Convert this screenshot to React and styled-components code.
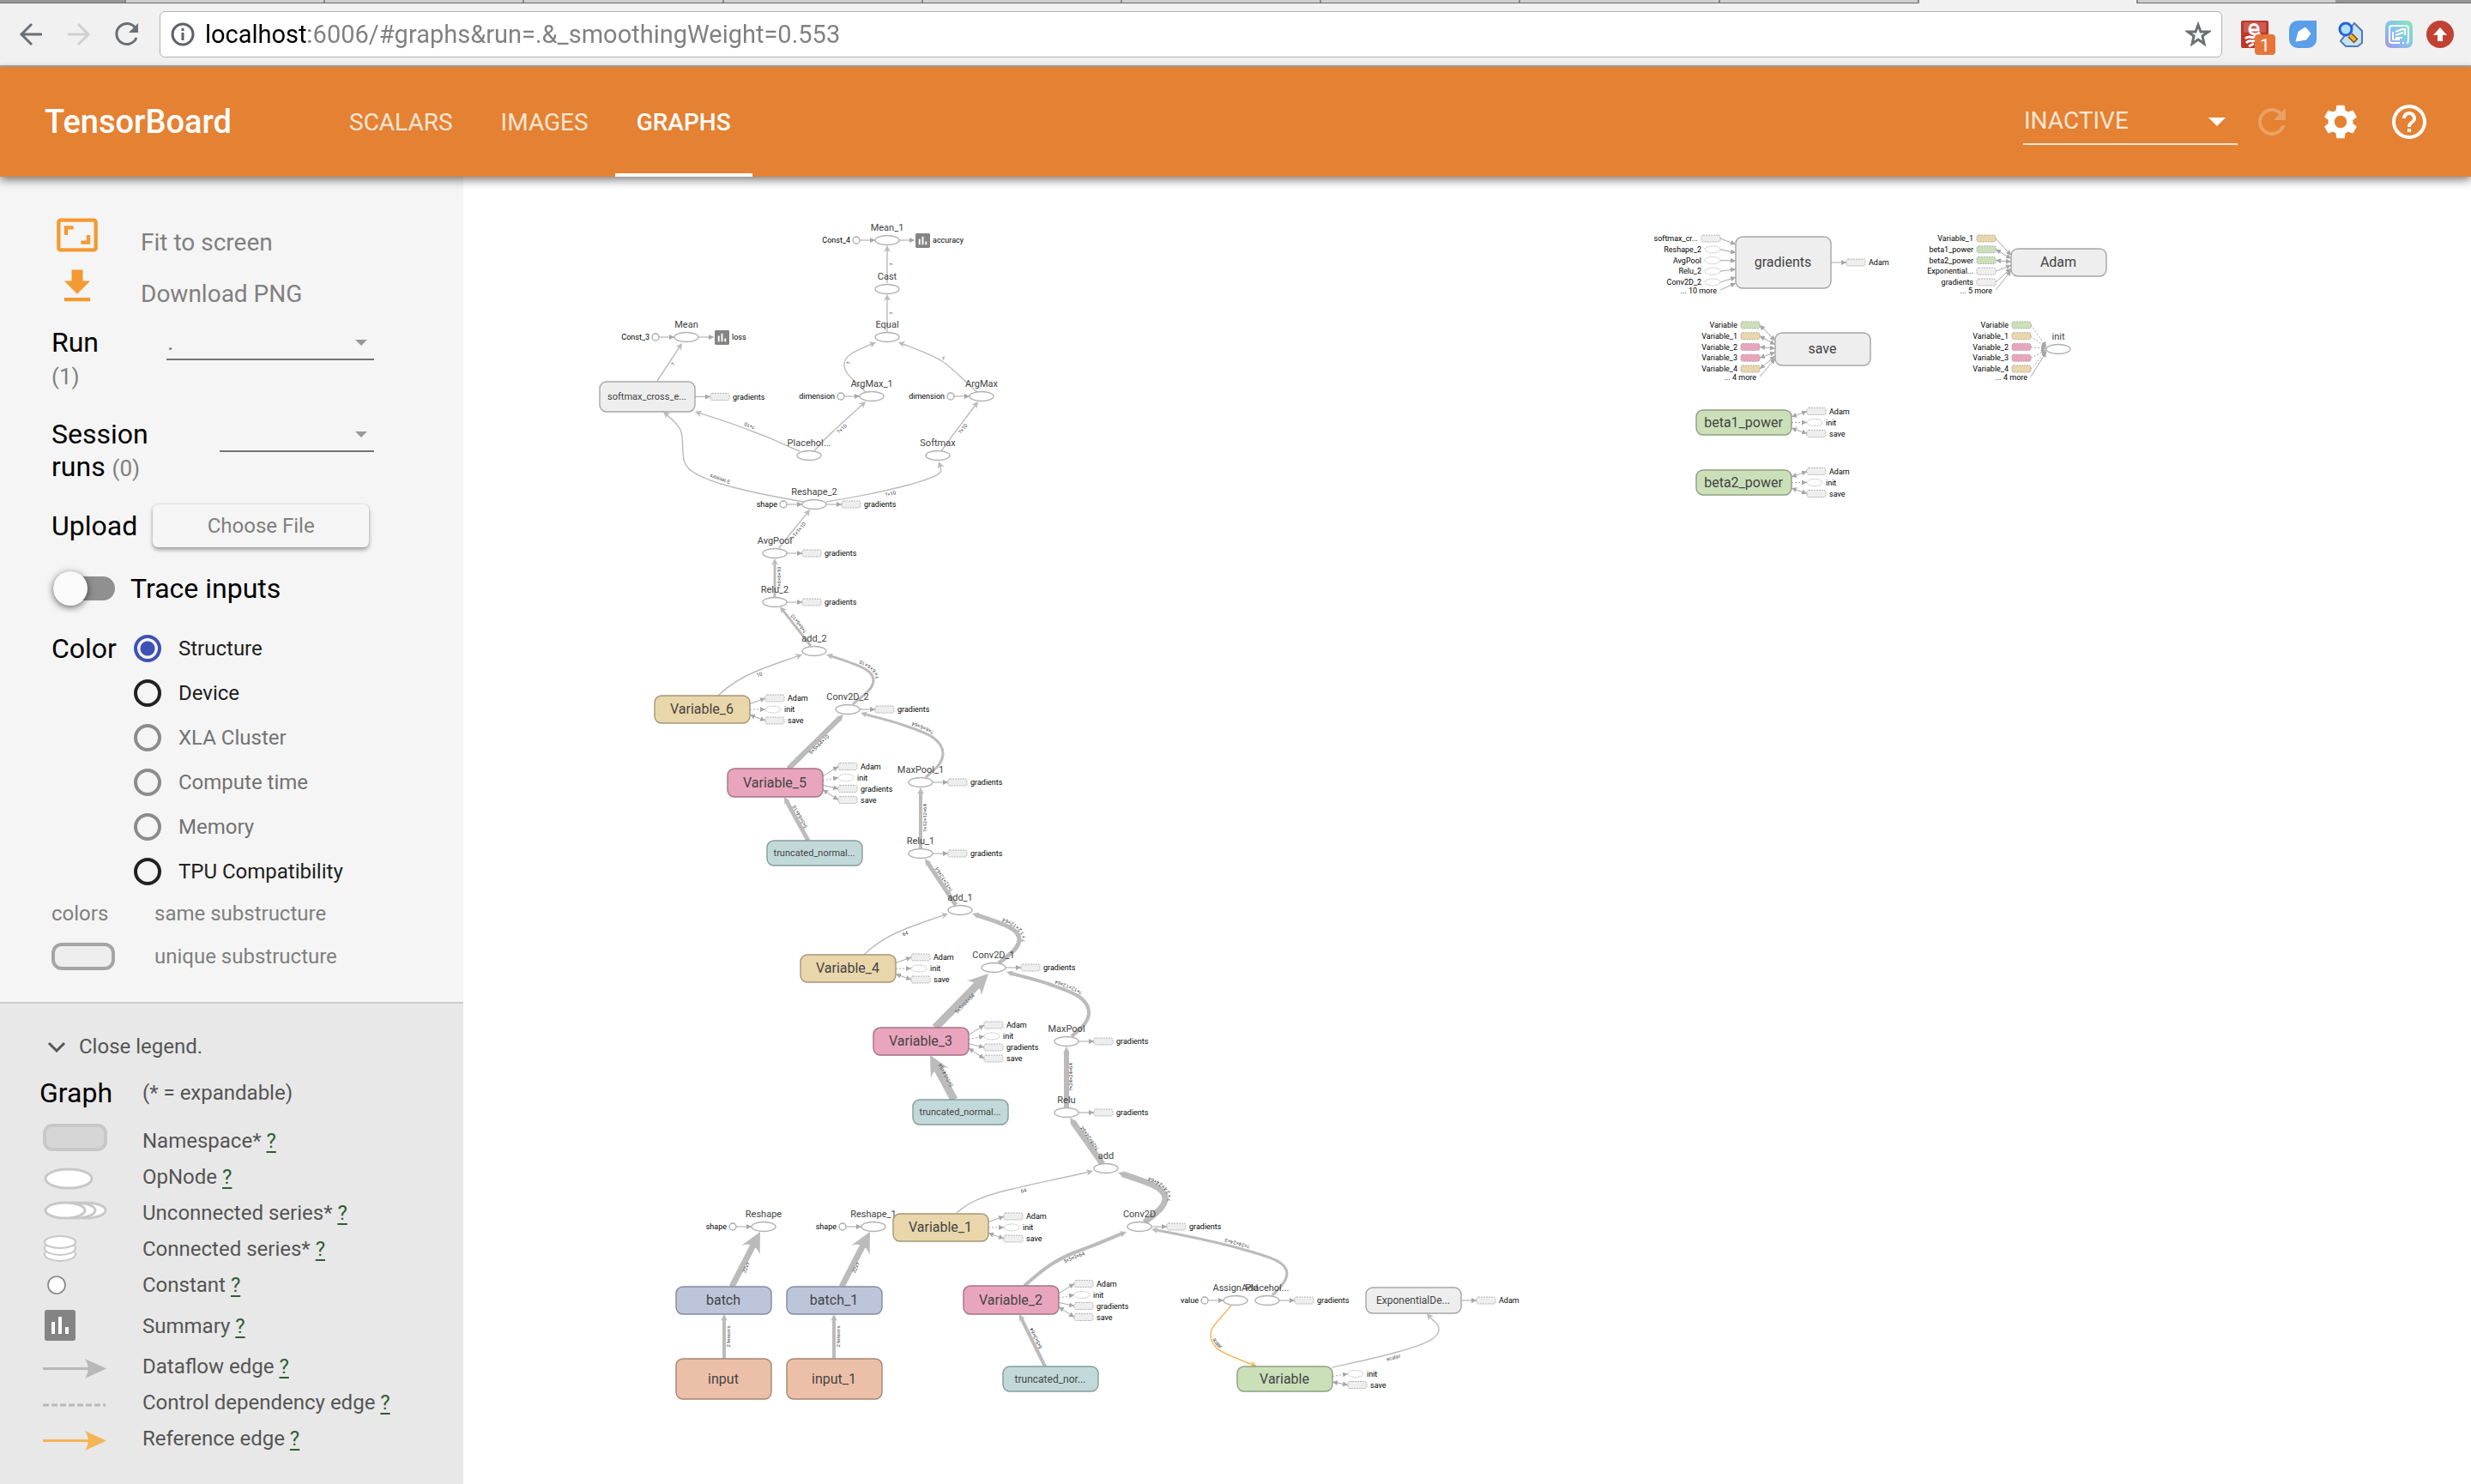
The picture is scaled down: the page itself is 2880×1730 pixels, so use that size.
import React, { useState } from 'react';
import styled, { createGlobalStyle } from 'styled-components';
import { MdAspectRatio, MdFileDownload, MdRefresh, MdSettings, MdHelpOutline } from 'react-icons/md';

const GlobalStyle = createGlobalStyle`
    * {
        box-sizing: border-box;
    }
    body {
        margin: 0;
        background: #ffffff;
        font-family: Roboto, "Liberation Sans", sans-serif;
        color: #000000;
    }
    button, input, select {
        font-family: inherit;
        margin: 0;
    }
`;

const Page = styled.div`
    display: flex;
    flex-direction: column;
    min-height: 100vh;
`;

/* ---------- browser strip ---------- */

const TabStrip = styled.div`
    display: flex;
    height: 4px;
    background: #979797;
    border-bottom: 1px solid #6b6b6b;
`;

const StripEnd = styled.div`
    width: ${props => props.w}px;
`;

const BrowserTab = styled.div`
    flex: ${props => (props.active ? 11 : 10)};
    height: ${props => (props.active ? 4 : 3)}px;
    background: ${props => (props.active ? '#f1f1f1' : '#cfcfcf')};
    border-left: 2px solid #8a8a8a;
`;

const Toolbar = styled.div`
    display: flex;
    align-items: center;
    height: 74px;
    padding: 0 20px 0 8px;
    background: #f1f1f1;
    border-bottom: 2px solid #ababab;
`;

const ToolButton = styled.button`
    display: flex;
    align-items: center;
    justify-content: center;
    width: 56px;
    height: 56px;
    padding: 0;
    border: 0;
    background: none;
    opacity: ${props => (props.disabled ? 0.25 : 1)};
`;

const AddressField = styled.div`
    display: flex;
    align-items: center;
    flex: 1;
    height: 54px;
    margin: 0 22px 0 10px;
    padding: 0 12px;
    gap: 12px;
    border: 1px solid #b3b3b3;
    border-radius: 6px;
    background: #ffffff;
`;

const AddressInput = styled.input`
    flex: 1;
    height: 50px;
    padding: 0;
    border: 0;
    outline: 0;
    font-size: 29px;
    color: transparent;
    background: linear-gradient(90deg, #000000 121px, #808080 121px);
    background-clip: text;
    -webkit-background-clip: text;
`;

const Extensions = styled.div`
    display: flex;
    align-items: center;
    gap: 8px;
`;

/* ---------- orange header ---------- */

const Header = styled.header`
    display: flex;
    align-items: center;
    height: 128px;
    padding: 0 48px 0 52px;
    background: #e58132;
    box-shadow: 0 4px 10px rgba(0, 0, 0, 0.5);
    position: relative;
    z-index: 1;
`;

const Brand = styled.h1`
    width: 330px;
    margin: 0;
    font-size: 38px;
    font-weight: 500;
    color: #ffffff;
`;

const Nav = styled.nav`
    display: flex;
    flex: 1;
    gap: 6px;
`;

const NavTab = styled.button`
    height: 128px;
    padding: 4px 25px 0;
    border: 0;
    border-bottom: 4px solid ${props => (props.active ? '#ffffff' : 'transparent')};
    background: none;
    font-size: 28px;
    font-weight: ${props => (props.active ? 500 : 400)};
    color: ${props => (props.active ? '#ffffff' : '#fae6d6')};
`;

const HeaderTools = styled.div`
    display: flex;
    align-items: center;
    gap: 32px;
`;

const HeaderIcon = styled.button`
    display: flex;
    padding: 0;
    border: 0;
    background: none;
    font-size: 48px;
    color: #ffffff;
    opacity: ${props => (props.disabled ? 0.25 : 1)};
`;

/* ---------- drop-downs ---------- */

const SelectBox = styled.div`
    position: relative;
    width: ${props => props.w}px;
    margin-right: ${props => props.after || 0}px;
`;

const Select = styled.select`
    appearance: none;
    display: block;
    width: 100%;
    height: ${props => (props.light ? 54 : 40)}px;
    padding: 0 2px 2px 1px;
    border: 0;
    border-bottom: 2px solid ${props => (props.light ? '#fae6d6' : '#737373')};
    border-radius: 0;
    outline: 0;
    background: none;
    font-size: 28px;
    color: ${props => (props.light ? '#fae6d6' : '#808080')};
    opacity: 1;
`;

const Caret = styled.span`
    position: absolute;
    top: ${props => (props.light ? 22 : 16)}px;
    right: ${props => (props.light ? 14 : 8)}px;
    border: solid transparent;
    border-width: ${props => (props.light ? '10px 10px 0' : '7px 7px 0')};
    border-top-color: ${props => (props.light ? '#ffffff' : '#999999')};
    pointer-events: none;
`;

/* ---------- side panel ---------- */

const Body = styled.div`
    display: flex;
    flex: 1;
`;

const Side = styled.aside`
    display: flex;
    flex-direction: column;
    width: 540px;
    flex-shrink: 0;
    background: #f5f5f5;
`;

const Controls = styled.div`
    padding: 42px 104px 28px 60px;
`;

const Action = styled.button`
    display: flex;
    gap: 48px;
    height: 60px;
    padding: 0 0 0 4px;
    border: 0;
    background: none;
    font-size: 28px;
    line-height: 50px;
    color: #808080;

    svg {
        font-size: 52px;
        color: #f39a33;
    }

    span {
        align-self: flex-end;
    }
`;

const Field = styled.div`
    display: flex;
    justify-content: space-between;
    margin-top: ${props => props.top}px;
`;

const FieldLabel = styled.label`
    max-width: ${props => props.w || 400}px;
    font-size: 32px;
    line-height: 38px;
`;

const ColorLabel = styled.span`
    font-size: 32px;
    line-height: 32px;
`;

const Counter = styled.span`
    font-size: 26px;
    line-height: 30px;
    color: #808080;
`;

const Line = styled.div`
    display: flex;
    align-items: center;
    gap: 18px;
    height: ${props => props.h}px;
    margin-top: ${props => props.top}px;
`;

const FileButton = styled.button`
    width: 252px;
    height: 50px;
    border: 0;
    border-radius: 6px;
    background: #f5f5f5;
    box-shadow: 0 3px 5px rgba(0, 0, 0, 0.35), 0 0 2px rgba(0, 0, 0, 0.15);
    font-size: 24px;
    color: #808080;
`;

const Toggle = styled.input`
    appearance: none;
    width: 72px;
    height: 28px;
    margin-left: 2px;
    border-radius: 14px;
    background: #909090;

    &::before {
        content: '';
        display: block;
        width: 40px;
        height: 40px;
        margin-top: -6px;
        margin-left: ${props => (props.checked ? 32 : 0)}px;
        border-radius: 50%;
        background: #fafafa;
        box-shadow: 0 2px 8px rgba(0, 0, 0, 0.6);
    }
`;

const ColorGroup = styled.div`
    display: grid;
    grid-template-columns: 96px 1fr;
    margin-top: 34px;
`;

const RadioList = styled.div`
    display: flex;
    flex-direction: column;
    gap: 20px;
`;

const RadioRow = styled.label`
    display: flex;
    align-items: center;
    gap: 20px;
    height: 32px;
    font-size: 24px;
    white-space: nowrap;
    color: ${props => (props.off ? '#737373' : '#212121')};
`;

const Radio = styled.input`
    appearance: none;
    width: 32px;
    height: 32px;
    border: 4px solid #212121;
    border-radius: 50%;

    &:disabled {
        border-color: #8c8c8c;
    }

    &:checked {
        border-color: #3f51b5;
        background: radial-gradient(circle, #3f51b5 8px, transparent 9px);
    }
`;

const Swatch = styled.div`
    display: grid;
    grid-template-columns: 120px 1fr;
    align-items: center;
    height: 50px;
    font-size: 24px;
    white-space: nowrap;
    color: #808080;
`;

const Swatches = styled.div`
    margin-top: 8px;
`;

const UniqueBox = styled.span`
    width: 74px;
    height: 32px;
    border: 4px solid #a5a5a5;
    border-radius: 12px;
    background: #eeeeee;
`;

/* ---------- legend ---------- */

const Legend = styled.section`
    flex: 1;
    padding: 34px 20px 30px 46px;
    border-top: 2px solid #cccccc;
    background: #e8e8e8;
    font-size: 24px;
    color: #555555;
`;

const LegendToggle = styled.button`
    display: flex;
    align-items: center;
    gap: 14px;
    height: 32px;
    padding: 0 0 0 8px;
    border: 0;
    background: none;
    font-size: 24px;
    color: #555555;
`;

const LegendTitle = styled.div`
    display: grid;
    grid-template-columns: 120px 1fr;
    align-items: center;
    height: 42px;
    margin: 17px 0 14px;
`;

const GraphTitle = styled.h2`
    margin: 0;
    font-size: 32px;
    font-weight: 400;
    color: #000000;
`;

const LegendRow = styled.div`
    display: grid;
    grid-template-columns: 116px 1fr;
    align-items: center;
    height: ${props => (props.tall ? 53 : 42)}px;
    margin-left: 4px;
    white-space: nowrap;
`;

const HelpLink = styled.a`
    color: #2e5e33;
    text-decoration: underline;
    text-underline-offset: 4px;
    text-decoration-thickness: 2px;
`;

const GraphArea = styled.main`
    flex: 1;
    min-width: 0;
    background: #ffffff;

    svg {
        display: block;
        width: 100%;
    }

    text {
        font-family: Roboto, "Liberation Sans", sans-serif;
    }
`;

/* ---------- graph pieces ---------- */

const EDGE = '#bbbbbb';
const LINK = '#a6a6a6';

const palette = {
    grey: ['#eeeeee', '#a6a6a6'],
    sand: ['#ead6ab', '#a59675'],
    pink: ['#e9a5bd', '#a37384'],
    teal: ['#c2d9d9', '#859c9a'],
    blue: ['#bcc5da', '#838ba0'],
    coral: ['#ecbfa8', '#a58572'],
    green: ['#cbe0b9', '#8e9f80'],
};

const out3 = [
    { dy: -13, label: 'Adam' },
    { dy: 0, label: 'init', op: true },
    { dy: 13, label: 'save', both: true },
];
const outPower = [{ dy: -13, label: 'Adam', both: true }, out3[1], out3[2]];
const out4 = [
    { dy: -19, label: 'Adam' },
    { dy: -6, label: 'init', op: true },
    { dy: 7, label: 'gradients' },
    { dy: 20, label: 'save', both: true },
];
const toGradients = [{ dy: 0, label: 'gradients' }];
const toAdam = [{ dy: 0, label: 'Adam' }];

const variablesIn = [
    { label: 'Variable', color: 'green' },
    { label: 'Variable_1', color: 'sand' },
    { label: 'Variable_2', color: 'pink' },
    { label: 'Variable_3', color: 'pink' },
    { label: 'Variable_4', color: 'sand' },
];

const boxes = [
    { x: 699, y: 445, h: 35, label: 'softmax_cross_e...', size: 11, color: 'grey', outs: toGradients },
    { x: 763, y: 811, h: 32, label: 'Variable_6', color: 'sand', outs: out3 },
    { x: 848, y: 896, h: 33, label: 'Variable_5', color: 'pink', outs: out4 },
    { x: 894, y: 980, h: 29, label: 'truncated_normal...', size: 11, color: 'teal' },
    { x: 933, y: 1113, h: 32, label: 'Variable_4', color: 'sand', outs: out3 },
    { x: 1018, y: 1198, h: 32, label: 'Variable_3', color: 'pink', outs: out4 },
    { x: 1064, y: 1282, h: 29, label: 'truncated_normal...', size: 11, color: 'teal' },
    { x: 1041, y: 1415, h: 32, label: 'Variable_1', color: 'sand', outs: out3 },
    { x: 1123, y: 1499, h: 33, label: 'Variable_2', color: 'pink', outs: out4 },
    { x: 1169, y: 1593, h: 29, label: 'truncated_nor...', size: 12, color: 'teal' },
    { x: 788, y: 1500, h: 32, label: 'batch', color: 'blue' },
    { x: 917, y: 1500, h: 32, label: 'batch_1', color: 'blue' },
    { x: 788, y: 1584, h: 47, label: 'input', color: 'coral' },
    { x: 917, y: 1584, h: 47, label: 'input_1', color: 'coral' },
    { x: 1442, y: 1593, h: 29, label: 'Variable', color: 'green', outs: [{ dy: -6, label: 'init', op: true }, { dy: 7, label: 'save', both: true }] },
    { x: 1592, y: 1501, h: 30, label: 'ExponentialDe...', size: 12, color: 'grey', outs: toAdam },
    {
        x: 2023, y: 276, h: 60, label: 'gradients', color: 'grey', outs: toAdam, more: '... 10 more', spread: 0.75,
        ins: [
            { label: 'softmax_cr...', color: 'grey' },
            { label: 'Reshape_2', op: true },
            { label: 'AvgPool', op: true },
            { label: 'Relu_2', op: true },
            { label: 'Conv2D_2', op: true },
        ],
    },
    {
        x: 2344, y: 290, h: 32, label: 'Adam', color: 'grey', more: '... 5 more', spread: 0.3,
        ins: [
            { label: 'Variable_1', color: 'sand' },
            { label: 'beta1_power', color: 'green', both: true },
            { label: 'beta2_power', color: 'green', both: true },
            { label: 'Exponential...', color: 'grey' },
            { label: 'gradients', color: 'grey' },
        ],
    },
    { x: 2069, y: 388, h: 38, label: 'save', color: 'grey', more: '... 4 more', spread: 0.35, ins: variablesIn.map(v => ({ ...v, both: true })) },
    { x: 1977, y: 478, h: 29, label: 'beta1_power', color: 'green', outs: outPower },
    { x: 1977, y: 548, h: 29, label: 'beta2_power', color: 'green', outs: outPower },
];

const ops = [
    { x: 1034, y: 280, label: 'Mean_1', constant: 'Const_4', summary: 'accuracy' },
    { x: 1034, y: 337, label: 'Cast' },
    { x: 1034, y: 393, label: 'Equal' },
    { x: 800, y: 393, label: 'Mean', constant: 'Const_3', summary: 'loss' },
    { x: 1016, y: 462, label: 'ArgMax_1', constant: 'dimension' },
    { x: 1144, y: 462, label: 'ArgMax', constant: 'dimension' },
    { x: 943, y: 531, label: 'Placehol...' },
    { x: 1093, y: 531, label: 'Softmax' },
    { x: 949, y: 588, label: 'Reshape_2', constant: 'shape', outs: toGradients },
    { x: 903, y: 645, label: 'AvgPool', outs: toGradients },
    { x: 903, y: 702, label: 'Relu_2', outs: toGradients },
    { x: 949, y: 759, label: 'add_2' },
    { x: 988, y: 827, label: 'Conv2D_2', outs: toGradients },
    { x: 1073, y: 912, label: 'MaxPool_1', outs: toGradients },
    { x: 1073, y: 995, label: 'Relu_1', outs: toGradients },
    { x: 1119, y: 1061, label: 'add_1' },
    { x: 1158, y: 1128, label: 'Conv2D_1', outs: toGradients },
    { x: 1243, y: 1214, label: 'MaxPool', outs: toGradients },
    { x: 1243, y: 1297, label: 'Relu', outs: toGradients },
    { x: 1289, y: 1362, label: 'add' },
    { x: 890, y: 1430, label: 'Reshape', constant: 'shape' },
    { x: 1018, y: 1430, label: 'Reshape_1', constant: 'shape' },
    { x: 1328, y: 1430, label: 'Conv2D', outs: toGradients },
    { x: 1440, y: 1516, label: 'AssignAdd', constant: 'value' },
    { x: 1477, y: 1516, label: 'Placehol...', outs: toGradients },
    { x: 2399, y: 407, label: 'init', ins: variablesIn, more: '... 4 more', dotted: true, spread: 0.1 },
];

const shift = (pts, dx, dy) => pts.map(([x, y]) => [x + dx, y + dy]);

// shapes that repeat for each convolution layer
const biasCurve = [[837, 811], [850, 798], [865, 789], [885, 781], [900, 775], [918, 769], [935, 763]];
const addCurve = [[994, 821], [1007, 810], [1017, 804], [1018, 794], [1019, 781], [1000, 775], [963, 763]];
const poolCurve = [[1079, 906], [1090, 897], [1098, 890], [1099, 880], [1100, 860], [1075, 853], [1055, 846], [1038, 840], [1020, 836], [1003, 831]];

// each edge is a line (2 points) or a chain of cubics, from source to target
const edges = [
    { pts: [[1034, 330], [1034, 286]], label: '?' },
    { pts: [[1034, 387], [1034, 343]], label: '?' },
    { pts: [[766, 444], [795, 400]], label: '?' },
    { pts: [[1009, 457], [992, 440], [984, 435], [984, 425], [984, 413], [1000, 408], [1021, 399]], label: '?' },
    { pts: [[1139, 457], [1120, 440], [1110, 429], [1098, 421], [1085, 413], [1068, 407], [1047, 399]], label: '?' },
    { pts: [[932, 526], [910, 517], [900, 511], [885, 506], [860, 496], [840, 489], [810, 480]], label: '?×10' },
    { pts: [[949, 526], [962, 509], [990, 486], [1009, 468]], label: '?×10' },
    { pts: [[1097, 526], [1111, 506], [1126, 487], [1140, 468]], label: '?×10' },
    {
        pts: [[937, 585], [890, 577], [860, 570], [840, 564], [796, 550], [797, 540], [796, 528], [795, 505], [798, 501], [773, 480]],
        label: '3 tensors', at: '47%',
    },
    { pts: [[963, 585], [1000, 579], [1030, 573], [1060, 565], [1100, 554], [1098, 550], [1094, 538]], label: '?×10' },
    { pts: [[908, 639], [919, 624], [930, 612], [944, 594]], label: '?×1×1×10' },
    { pts: [[903, 696], [903, 651]], label: '?×6×6×10', w: 3 },
    { pts: [[945, 753], [909, 707]], label: '?×6×6×10', w: 3 },
    { pts: biasCurve, label: '10' },
    { pts: addCurve, label: '?×6×6×10', w: 3 },
    { pts: [[919, 896], [983, 833]], label: '5×5×64×10', w: 6 },
    { pts: poolCurve, label: '?×6×6×64', w: 3 },
    { pts: [[942, 980], [914, 929]], label: '5×5×64×10', w: 5 },
    { pts: [[1073, 989], [1073, 918]], label: '?×12×12×64', w: 4 },
    { pts: [[1114, 1055], [1078, 1001]], label: '?×12×12×64', w: 5 },
    { pts: shift(biasCurve, 170, 302), label: '64' },
    { pts: shift(addCurve, 170, 302), label: '?×12×12×64', w: 5 },
    { pts: [[1090, 1198], [1152, 1135]], label: '5×5×64×64', w: 9, head: 24 },
    { pts: shift(poolCurve, 170, 302), label: '?×12×12×64', w: 4 },
    { pts: [[1112, 1282], [1084, 1230]], label: '5×5×64×64', w: 9, head: 24 },
    { pts: [[1243, 1291], [1243, 1220]], label: '?×24×24×64', w: 6 },
    { pts: [[1285, 1357], [1247, 1303]], label: '?×24×24×64', w: 7 },
    { pts: [[1115, 1414], [1130, 1400], [1150, 1393], [1180, 1386], [1210, 1379], [1240, 1373], [1274, 1365]], label: '64' },
    { pts: shift(addCurve, 340, 604), label: '?×24×24×64', w: 7 },
    { pts: [[1194, 1499], [1215, 1480], [1230, 1468], [1258, 1458], [1275, 1452], [1295, 1443], [1313, 1436]], label: '5×5×3×64', w: 4 },
    {
        pts: [[1483, 1510], [1492, 1501], [1499, 1494], [1500, 1485], [1500, 1468], [1470, 1463], [1440, 1454], [1405, 1445], [1375, 1439], [1342, 1433]],
        label: '?×24×24×3', w: 3,
    },
    { pts: [[1218, 1593], [1188, 1532]], label: '5×5×3×64', w: 4 },
    { pts: [[853, 1500], [886, 1436]], label: '32×?', w: 7, head: 24, at: '38%' },
    { pts: [[981, 1500], [1014, 1436]], label: '32×?', w: 7, head: 24, at: '38%' },
    { pts: [[844, 1584], [844, 1532]], label: '2 tensors', w: 4 },
    { pts: [[972, 1584], [972, 1532]], label: '2 tensors', w: 4 },
    {
        pts: [[1435, 1522], [1422, 1538], [1411, 1546], [1411, 1556], [1411, 1574], [1430, 1579], [1465, 1593]],
        label: 'scalar', stroke: '#f5b455', above: true,
    },
    { pts: [[1553, 1594], [1575, 1589], [1600, 1584], [1629, 1576], [1662, 1567], [1677, 1560], [1677, 1550], [1677, 1543], [1673, 1543], [1663, 1531]], label: 'scalar', at: '45%' },
];

const toPath = pts => {
    const [first, ...rest] = pts;
    return `M${first.join(' ')} ${pts.length === 2 ? 'L' : 'C'}${rest.map(p => p.join(' ')).join(' ')}`;
};

const Edge = ({ id, pts, label, w = 1.4, head = 8, stroke = EDGE, at = '50%', above }) => {
    const tip = pts[pts.length - 1];
    const prev = pts[pts.length - 2];
    const angle = Math.atan2(tip[1] - prev[1], tip[0] - prev[0]);
    const back = head * 0.7;
    const end = [tip[0] - Math.cos(angle) * back, tip[1] - Math.sin(angle) * back];
    return (
        <g>
            <path d={toPath([...pts.slice(0, -1), end])} fill="none" stroke={stroke} strokeWidth={w} />
            <path id={id} d={toPath(pts)} fill="none" />
            <path
                d="M0 0L-10 5C-7 2-7-2-10-5Z"
                fill={stroke}
                transform={`translate(${tip}) rotate(${(angle * 180) / Math.PI}) scale(${head / 10})`}
            />
            <text fontSize="6" fill="#444" textAnchor="middle" dy={above ? -2 : 7}>
                <textPath href={`#${id}`} startOffset={at}>{label}</textPath>
            </text>
        </g>
    );
};

const Link = ({ x1, y1, x2, y2, dashed, both, plain }) => (
    <line
        x1={x1}
        y1={y1}
        x2={x2}
        y2={y2}
        stroke={LINK}
        strokeWidth="1"
        strokeDasharray={dashed ? '2 2' : undefined}
        markerEnd={plain ? undefined : 'url(#linkEnd)'}
        markerStart={both ? 'url(#linkStart)' : undefined}
    />
);

const Chip = ({ x, y, op, color = 'grey' }) => (op
    ? <ellipse cx={x} cy={y} rx="9" ry="4" fill="#fff" stroke="#bbb" strokeDasharray="2 1" />
    : <rect x={x - 11} y={y - 4} width="22" height="8" rx="2" fill={palette[color][0]} stroke="#999" strokeOpacity="0.7" strokeDasharray="2 1" />
);

// outgoing annotations, x is the right edge of the node
const Outs = ({ x, y, items = [] }) => items.map(({ dy, label, op, both }) => (
    <g key={label}>
        <Link x1={x} y1={y + dy * (items.length > 3 ? 0.4 : 0.5)} x2={x + 18} y2={y + dy} dashed={op} both={both} />
        <Chip x={x + (op ? 27 : 29)} y={y + dy} op={op} />
        <text x={x + (op ? 40 : 44)} y={y + dy + 3} fontSize="9">{label}</text>
    </g>
));

// incoming annotations, x is the left edge of the node
const Ins = ({ x, y, items = [], more, spread, dotted }) => (
    <g>
        {items.map(({ label, op, color, both }, i) => {
            const dy = -28 + i * 12.75;
            return (
                <g key={label}>
                    <Link x1={x - 18} y1={y + dy} x2={x} y2={y + dy * spread} both={both} dashed={dotted} />
                    <Chip x={x - (op ? 27 : 29)} y={y + dy} op={op} color={color} />
                    <text x={x - (op ? 40 : 44)} y={y + dy + 3} fontSize="9" textAnchor="end">{label}</text>
                </g>
            );
        })}
        {more && <Link x1={x - 18} y1={y + 32} x2={x} y2={y + 32 * spread} />}
        {more && <text x={x - 22} y={y + 36} fontSize="9" textAnchor="end">{more}</text>}
    </g>
);

const Bars = ({ x, y, size }) => (
    <g transform={`translate(${x} ${y}) scale(${size / 36})`}>
        <rect width="36" height="36" rx="3" fill="#848484" />
        <path d="M8 14h4v14h-4zM16 8h4v20h-4zM24 20h4v8h-4z" fill="#fff" />
    </g>
);

const BoxNode = ({ x, y, h, label, size = 16, color, outs, ins, more, spread }) => {
    const mid = y + h / 2;
    return (
        <g>
            <Outs x={x + 111} y={mid} items={outs} />
            {ins && <Ins x={x} y={mid} items={ins} more={more} spread={spread} />}
            <rect x={x} y={y} width="111" height={h} rx="8" fill={palette[color][0]} stroke={palette[color][1]} strokeWidth="1.4" />
            <text x={x + 55} y={mid + size * 0.34} fontSize={size} fill="#444" textAnchor="middle">{label}</text>
        </g>
    );
};

const OpNode = ({ x, y, label, constant, summary, outs, ins, more, spread, dotted }) => (
    <g>
        {constant && (
            <g>
                <Link x1={x - 32} y1={y} x2={x - 14} y2={y} />
                <circle cx={x - 36} cy={y} r="4" fill="#fff" stroke="#aaa" strokeWidth="1.3" />
                <text x={x - 43} y={y + 3} fontSize="9" textAnchor="end">{constant}</text>
            </g>
        )}
        {summary && (
            <g>
                <Link x1={x + 14} y1={y} x2={x + 32} y2={y} />
                <Bars x={x + 33} y={y - 8} size={17} />
                <text x={x + 53} y={y + 3} fontSize="9">{summary}</text>
            </g>
        )}
        <Outs x={x + 14} y={y} items={outs} />
        {ins && <Ins x={x - 14} y={y} items={ins} more={more} spread={spread} dotted={dotted} />}
        <ellipse cx={x} cy={y} rx="14" ry="5.5" fill="#fff" stroke="#b0b0b0" strokeWidth="1.4" />
        <text x={x} y={y - 11} fontSize="11" fill="#444" textAnchor="middle">{label}</text>
    </g>
);

const Graph = () => (
    <svg viewBox="540 206 2340 1524" role="img" aria-label="Computation graph">
        <defs>
            <marker id="linkEnd" viewBox="0 0 6 6" refX="6" refY="3" markerWidth="6" markerHeight="6" markerUnits="userSpaceOnUse" orient="auto">
                <path d="M0 0L6 3L0 6Z" fill={LINK} />
            </marker>
            <marker id="linkStart" viewBox="0 0 6 6" refX="0" refY="3" markerWidth="6" markerHeight="6" markerUnits="userSpaceOnUse" orient="auto">
                <path d="M6 0L0 3L6 6Z" fill={LINK} />
            </marker>
        </defs>
        {edges.map((e, i) => <Edge key={i} id={`edge${i}`} {...e} />)}
        {ops.map((n, i) => <OpNode key={i} {...n} />)}
        {boxes.map((n, i) => <BoxNode key={i} {...n} />)}
    </svg>
);

const Arrow = ({ color }) => (
    <g fill={color}>
        <rect y="22" width="54" height="3" />
        <path d="M74 23.500L49 35C54 28 54 19 49 12Z" />
    </g>
);

const ring = { fill: '#fff', stroke: '#c8c8c8', strokeWidth: 3 };

const legendRows = [
    { text: 'Namespace*', icon: <rect x="2" y="3" width="71" height="28" rx="9" fill="#d6d6d6" stroke="#c8c8c8" strokeWidth="4" /> },
    { text: 'OpNode', icon: <ellipse cx="30" cy="23" rx="27" ry="11" {...ring} /> },
    {
        text: 'Unconnected series*',
        icon: (
            <g {...ring}>
                <ellipse cx="50" cy="18" rx="23" ry="9" />
                <ellipse cx="38" cy="18" rx="23" ry="9" />
                <ellipse cx="26" cy="18" rx="23" ry="9" />
            </g>
        ),
    },
    {
        text: 'Connected series*',
        icon: (
            <g {...ring} strokeWidth="2">
                <ellipse cx="20" cy="27" rx="18" ry="8" />
                <ellipse cx="20" cy="20" rx="18" ry="8" />
                <ellipse cx="20" cy="13" rx="18" ry="7" />
            </g>
        ),
    },
    { text: 'Constant', icon: <circle cx="16" cy="21" r="10" fill="#fff" stroke="#848484" strokeWidth="1.6" /> },
    { text: 'Summary', tall: true, icon: <Bars x={2} y={2} size={36} /> },
    { text: 'Dataflow edge', icon: <Arrow color="#b8b8b8" /> },
    { text: 'Control dependency edge', icon: <path d="M0 24H73" stroke="#b8b8b8" strokeWidth="3" strokeDasharray="7 3" /> },
    { text: 'Reference edge', icon: <Arrow color="#f5b455" /> },
];

const colorOptions = [
    { name: 'Structure' },
    { name: 'Device' },
    { name: 'XLA Cluster', off: true },
    { name: 'Compute time', off: true },
    { name: 'Memory', off: true },
    { name: 'TPU Compatibility' },
];

const glyph = { fill: 'none', stroke: '#6b7075', strokeWidth: 3 };

const BrowserBar = () => (
    <>
        <TabStrip>
            <StripEnd w={145} />
            {[0, 1, 2, 3, 4, 5, 6, 7, 8, 9, 10].map(i => <BrowserTab key={i} active={i === 9 ? 1 : 0} />)}
            <StripEnd w={158} />
        </TabStrip>
        <Toolbar>
            <ToolButton aria-label="Back">
                <svg width="32" height="32" {...glyph}><path d="M29 16H5M17 4L5 16L17 28" /></svg>
            </ToolButton>
            <ToolButton aria-label="Forward" disabled>
                <svg width="32" height="32" {...glyph}><path d="M3 16H27M15 4L27 16L15 28" /></svg>
            </ToolButton>
            <ToolButton aria-label="Reload">
                <svg width="32" height="32" {...glyph}>
                    <path d="M26 9A12 12 0 1 0 27 20" />
                    <path d="M29 3V14H18Z" fill="#6b7075" stroke="none" />
                </svg>
            </ToolButton>
            <AddressField>
                <svg width="28" height="28" viewBox="0 0 28 28" fill="none" stroke="#5f6368" strokeWidth="3">
                    <circle cx="14" cy="14" r="12" />
                    <path d="M14 12V21M14 7V10" />
                </svg>
                <AddressInput aria-label="Address" defaultValue="localhost:6006/#graphs&run=.&_smoothingWeight=0.553" />
                <svg width="30" height="30" viewBox="0 0 30 30" fill="none" stroke="#6b7075" strokeWidth="3">
                    <path d="M15 4L18 12H27L20 17L22 26L15 21L8 26L10 17L3 12H12Z" />
                </svg>
            </AddressField>
            <Extensions>
                <svg width="48" height="48" viewBox="0 0 48 48">
                    <rect y="8" width="32" height="32" rx="2" fill="#bd3629" />
                    <path d="M3 10H29V22H3Z" fill="#cf5a50" />
                    <path d="M11 19H20C21 11 10 10 10 18C10 25 18 25 22 22M5 29C9 24 13 30 19 26M6 34C10 29 12 34 16 31M9 38L15 35" fill="none" stroke="#fff" strokeWidth="3" />
                    <rect x="16" y="24" width="24" height="24" rx="4" fill="#e7753a" />
                    <text x="28" y="44" fontSize="21" fill="#fff" textAnchor="middle">1</text>
                </svg>
                <svg width="48" height="48" viewBox="0 0 48 48">
                    <path d="M10 8H32V30A10 10 0 0 1 22 40H10A10 10 0 0 1 0 30V18A10 10 0 0 1 10 8Z" fill="#5a9eec" />
                    <path d="M8 32L11 21L19 16L25 23L20 30Z" fill="#fff" stroke="#fff" strokeLinejoin="round" />
                </svg>
                <svg width="48" height="48" viewBox="0 0 48 48">
                    <path d="M20 11L29 20V34L24 38H10L4 32L10 24Z" fill="#c5e3f5" stroke="#5379b5" strokeWidth="2" />
                    <path d="M15 25L22 32" stroke="#7a4a12" strokeWidth="7" />
                    <path d="M15 25L21 31" stroke="#f5b52a" strokeWidth="4" />
                    <circle cx="10" cy="18" r="7" fill="#aee0ff" stroke="#2563d8" strokeWidth="3" />
                </svg>
                <svg width="40" height="48" viewBox="0 0 40 48">
                    <defs>
                        <linearGradient id="ext" x1="0" y1="1" x2="1" y2="0">
                            <stop offset="0" stopColor="#a595ec" />
                            <stop offset="0.5" stopColor="#84c5ec" />
                            <stop offset="1" stopColor="#8ce5b5" />
                        </linearGradient>
                    </defs>
                    <rect y="8" width="32" height="32" rx="7" fill="url(#ext)" />
                    <g fill="none" stroke="#fff" strokeWidth="2">
                        <path d="M17 34H8Q5 34 5 31V17Q5 14 8 14H24Q27 14 27 17V31Q27 34 25 34M20 34H22" />
                        <path d="M9 21V30H17M18 18H23V25M12 21L20 18M12 25L21 22M12 28H20" />
                    </g>
                </svg>
                <svg width="32" height="48" viewBox="0 0 32 48">
                    <circle cx="16" cy="24" r="16" fill="#c14233" />
                    <path d="M16 16L24 25H19V32H13V25H8Z" fill="#fff" />
                </svg>
            </Extensions>
        </Toolbar>
    </>
);

const App = () => {
    const [tab, setTab] = useState('GRAPHS');
    const [color, setColor] = useState('Structure');
    const [trace, setTrace] = useState(false);

    return (
        <Page>
            <GlobalStyle />
            <BrowserBar />
            <Header>
                <Brand>TensorBoard</Brand>
                <Nav>
                    {['SCALARS', 'IMAGES', 'GRAPHS'].map(name => (
                        <NavTab key={name} active={tab === name ? 1 : 0} onClick={() => setTab(name)}>{name}</NavTab>
                    ))}
                </Nav>
                <SelectBox w={250} after={16}>
                    <Select light={1} aria-label="Inactive dashboards">
                        <option>INACTIVE</option>
                    </Select>
                    <Caret light={1} />
                </SelectBox>
                <HeaderTools>
                    <HeaderIcon aria-label="Reload" disabled><MdRefresh /></HeaderIcon>
                    <HeaderIcon aria-label="Settings"><MdSettings /></HeaderIcon>
                    <HeaderIcon aria-label="Help"><MdHelpOutline /></HeaderIcon>
                </HeaderTools>
            </Header>
            <Body>
                <Side>
                    <Controls>
                        <Action><MdAspectRatio /><span>Fit to screen</span></Action>
                        <Action><MdFileDownload /><span>Download PNG</span></Action>
                        <Field top={12}>
                            <FieldLabel htmlFor="run" w={80}>Run <Counter>(1)</Counter></FieldLabel>
                            <SelectBox w={242}>
                                <Select id="run"><option>.</option></Select>
                                <Caret />
                            </SelectBox>
                        </Field>
                        <Field top={31}>
                            <FieldLabel htmlFor="session" w={130}>Session runs <Counter>(0)</Counter></FieldLabel>
                            <SelectBox w={180}>
                                <Select id="session" />
                                <Caret />
                            </SelectBox>
                        </Field>
                        <Line top={25} h={50}>
                            <FieldLabel as="span">Upload</FieldLabel>
                            <FileButton>Choose File</FileButton>
                        </Line>
                        <Line top={28} h={40}>
                            <Toggle type="checkbox" id="trace" checked={trace} onChange={() => setTrace(!trace)} />
                            <FieldLabel htmlFor="trace">Trace inputs</FieldLabel>
                        </Line>
                        <ColorGroup>
                            <ColorLabel>Color</ColorLabel>
                            <RadioList>
                                {colorOptions.map(({ name, off }) => (
                                    <RadioRow key={name} off={off ? 1 : 0}>
                                        <Radio type="radio" name="color" disabled={off} checked={color === name} onChange={() => setColor(name)} />
                                        {name}
                                    </RadioRow>
                                ))}
                            </RadioList>
                        </ColorGroup>
                        <Swatches>
                            <Swatch><span>colors</span><span>same substructure</span></Swatch>
                            <Swatch><UniqueBox /><span>unique substructure</span></Swatch>
                        </Swatches>
                    </Controls>
                    <Legend>
                        <LegendToggle>
                            <svg width="24" height="24" fill="none" stroke="#555" strokeWidth="3"><path d="M3 8L12 17L21 8" /></svg>
                            Close legend.
                        </LegendToggle>
                        <LegendTitle>
                            <GraphTitle>Graph</GraphTitle>
                            <span>(* = expandable)</span>
                        </LegendTitle>
                        {legendRows.map(({ text, icon, tall }) => (
                            <LegendRow key={text} tall={tall ? 1 : 0}>
                                <svg width="80" height="42" viewBox="0 0 80 42">{icon}</svg>
                                <span>{text} <HelpLink href="#graphs">?</HelpLink></span>
                            </LegendRow>
                        ))}
                    </Legend>
                </Side>
                <GraphArea>
                    <Graph />
                </GraphArea>
            </Body>
        </Page>
    );
};

export default App;
